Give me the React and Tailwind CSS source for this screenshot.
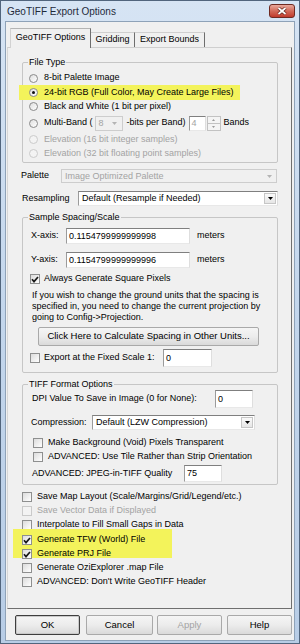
import React from 'react';

const Radio = ({ checked, disabled }) => (
  <span
    className={`w-[9px] h-[9px] rounded-full border flex items-center justify-center shrink-0 ${
      disabled ? 'border-[#cbcbcb] bg-[#f3f3f3]' : 'border-[#8a8a8a] bg-gradient-to-br from-[#dedede] to-white'
    }`}
  >
    {checked && <span className="w-[3px] h-[3px] rounded-full bg-[#111]" />}
  </span>
);

const Check = ({ checked, disabled }) => (
  <span
    className={`w-[10px] h-[10px] border shrink-0 flex items-center justify-center ${
      disabled ? 'border-[#cacaca] bg-[#f3f3f3]' : 'border-[#8e8f8f] bg-gradient-to-br from-[#dcdcdc] to-white'
    }`}
  >
    {checked && (
      <svg width="8" height="7" viewBox="0 0 8 7">
        <path d="M1 3.3 L3 5.6 L7 1" stroke="#1a1a1a" strokeWidth="1.7" fill="none" />
      </svg>
    )}
  </span>
);

const Field = ({ value, className = '', muted }) => (
  <div
    className={`bg-white border border-t-[#7f7f7f] border-l-[#9b9b9b] border-r-[#dedede] border-b-[#e8e8e8] flex items-center pl-[2px] leading-none ${
      muted ? 'text-[#a3a3a3] bg-[#f6f6f6]' : ''
    } ${className}`}
  >
    {value}
  </div>
);

const Arrow = ({ muted }) => (
  <svg width="5" height="3" viewBox="0 0 5 3">
    <path d="M0 0h5L2.5 3z" fill={muted ? '#b4b4b4' : '#000'} />
  </svg>
);

const Combo = ({ value, className = '', disabled }) => (
  <div
    className={`flex items-center border leading-none ${
      disabled
        ? 'border-[#cdcdcd] bg-[#f0f0f0] text-[#a3a3a3]'
        : 'border-t-[#7f7f7f] border-l-[#9b9b9b] border-r-[#dedede] border-b-[#e8e8e8] bg-white'
    } ${className}`}
  >
    <span className="flex-1 pl-[3px] whitespace-nowrap overflow-hidden">{value}</span>
    <span
      className={`w-[12px] self-stretch m-[1px] flex items-center justify-center ${
        disabled ? '' : 'border border-[#c6c6c6] bg-gradient-to-b from-[#fafafa] to-[#e6e6e6]'
      }`}
    >
      <Arrow muted={disabled} />
    </span>
  </div>
);

const Btn = ({ children, className = '', primary, disabled }) => (
  <div
    className={`flex items-center justify-center rounded-[2px] border bg-gradient-to-b from-[#f5f5f5] via-[#ececec] to-[#dadada] text-[9.5px] ${
      primary ? 'border-[#3e3e3e] shadow-[inset_0_0_0_1px_#c9c9c9]' : 'border-[#a9a9a9]'
    } ${disabled ? 'text-[#a3a3a3]' : ''} ${className}`}
  >
    {children}
  </div>
);

const Group = ({ label, className = '', children }) => (
  <div className={`w-[256px] border border-[#c6c6c6] rounded-[2px] flex flex-col ${className}`}>
    <div className="-mt-[7px] ml-[5px] px-[1px] w-fit bg-[#f0f0f0] leading-[12px]">{label}</div>
    {children}
  </div>
);

const Row = ({ className = '', children }) => <div className={`flex items-center whitespace-nowrap ${className}`}>{children}</div>;

export default function App() {
  return (
    <div className="w-[300px] h-[644px] border border-[#51657d] bg-gradient-to-b from-[#d6e4f4] via-[#c3d6ec] to-[#b8cde6] flex flex-col font-['Liberation_Sans',Arial,sans-serif] text-[9px] text-black overflow-hidden">
      {/* title bar */}
      <div className="h-[20px] shrink-0 flex items-center pl-[6px] pr-[4px]">
        <span className="text-[10px] text-[#1e2a3a] flex-1">GeoTIFF Export Options</span>
        <div className="w-[26px] h-[14px] rounded-[3px] border border-[#6f2a22] bg-gradient-to-b from-[#e8a89c] via-[#d26a5a] to-[#c0392b] flex items-center justify-center">
          <svg width="10" height="8" viewBox="0 0 10 8">
            <path d="M1.5 1 L8.5 7 M8.5 1 L1.5 7" stroke="#5b1c14" strokeWidth="3.2" />
            <path d="M1.5 1 L8.5 7 M8.5 1 L1.5 7" stroke="#fff" strokeWidth="1.8" />
          </svg>
        </div>
      </div>

      {/* body */}
      <div className="ml-[4px] w-[290px] h-[620px] border border-[#8ea2b8] bg-[#f0f0f0] flex flex-col">
        {/* tabs */}
        <div className="h-[26px] -mb-[1px] flex items-end pl-[4px]">
          <div className="relative z-10 w-[81px] h-[20px] bg-[#f0f0f0] border-t border-l border-r border-t-[#b4b4b4] border-l-[#d2d2d2] border-r-[#6e6e6e] flex justify-center pt-[2px] leading-[12px]">
            GeoTIFF Options
          </div>
          <div className="w-[44px] h-[15px] mb-[1px] border-t border-r border-t-[#cfcfcf] border-r-[#6e6e6e] flex justify-center leading-[12px]">
            Gridding
          </div>
          <div className="w-[70px] h-[15px] mb-[1px] border-t border-r border-t-[#cfcfcf] border-r-[#6e6e6e] flex justify-center leading-[12px]">
            Export Bounds
          </div>
        </div>

        {/* panel */}
        <div className="ml-[1px] w-[285px] h-[562px] shrink-0 border border-t-[#cfcfcf] border-l-[#d6d6d6] border-r-[#6f6f6f] border-b-[#6f6f6f] bg-[#f0f0f0] flex flex-col pl-[14px]">
          {/* File Type */}
          <Group label="File Type" className="mt-[14px] pb-[1px]">
            <div className="h-[3px]" />
            <Row className="h-[14px] pl-[6px]">
              <Radio />
              <span className="ml-[6px]">8-bit Palette Image</span>
            </Row>
            <Row className="h-[15px] -ml-[4px] w-[221px] pl-[10px] bg-[#f3f35b]">
              <Radio checked />
              <span className="ml-[6px]">24-bit RGB (Full Color, May Create Large Files)</span>
            </Row>
            <Row className="h-[13px] pl-[6px]">
              <Radio />
              <span className="ml-[6px]">Black and White (1 bit per pixel)</span>
            </Row>
            <Row className="h-[20px] pl-[6px]">
              <Radio />
              <span className="ml-[6px]">Multi-Band (</span>
              <Combo value="8" disabled className="ml-[2px] w-[28px] h-[15px] border-[#bdbdbd]" />
              <span className="ml-[4px]">-bits per Band)</span>
              <Field value="4" muted className="ml-[3px] w-[17px] h-[15px]" />
              <div className="w-[14px] h-[15px] flex flex-col ml-[1px]">
                <div className="flex-1 border border-[#c2c2c2] bg-[#f4f4f4] flex items-center justify-center">
                  <svg width="3" height="2" viewBox="0 0 3 2"><path d="M0 2h3L1.5 0z" fill="#9a9a9a" /></svg>
                </div>
                <div className="flex-1 border border-t-0 border-[#c2c2c2] bg-[#f4f4f4] flex items-center justify-center">
                  <svg width="3" height="2" viewBox="0 0 3 2"><path d="M0 0h3L1.5 2z" fill="#9a9a9a" /></svg>
                </div>
              </div>
              <span className="ml-[3px]">Bands</span>
            </Row>
            <Row className="h-[13px] pl-[6px] text-[#a3a3a3]">
              <Radio disabled />
              <span className="ml-[6px]">Elevation (16 bit integer samples)</span>
            </Row>
            <Row className="h-[15px] pl-[6px] text-[#a3a3a3]">
              <Radio disabled />
              <span className="ml-[6px]">Elevation (32 bit floating point samples)</span>
            </Row>
          </Group>

          {/* Palette / Resampling */}
          <Row className="mt-[6px] h-[14px] -ml-[1px]">
            <span className="w-[40px]">Palette</span>
            <Combo value="Image Optimized Palette" disabled className="w-[216px] h-[14px]" />
          </Row>
          <Row className="mt-[8px] h-[15px]">
            <span className="w-[56px]">Resampling</span>
            <Combo value="Default (Resample if Needed)" className="w-[200px] h-[15px]" />
          </Row>

          {/* Sample Spacing/Scale */}
          <Group label="Sample Spacing/Scale" className="mt-[11px] pb-[5px]">
            <Row className="mt-[5px] h-[16px] pl-[8px]">
              <span className="w-[35px]">X-axis:</span>
              <Field value="0.1154799999999998" className="w-[124px] h-[16px]" />
              <span className="ml-[7px]">meters</span>
            </Row>
            <Row className="mt-[8px] h-[16px] pl-[8px]">
              <span className="w-[35px]">Y-axis:</span>
              <Field value="0.1154799999999996" className="w-[124px] h-[16px]" />
              <span className="ml-[7px]">meters</span>
            </Row>
            <Row className="mt-[4px] h-[14px] pl-[7px]">
              <Check checked />
              <span className="ml-[4px]">Always Generate Square Pixels</span>
            </Row>
            <p className="mt-[4px] pl-[9px] leading-[11px] whitespace-nowrap">
              If you wish to change the ground units that the spacing is
              <br />
              specified in, you need to change the current projection by
              <br />
              going to Config-&gt;Projection.
            </p>
            <Btn className="mt-[4px] ml-[15px] w-[221px] h-[19px]">Click Here to Calculate Spacing in Other Units...</Btn>
            <Row className="mt-[3px] h-[18px] pl-[7px]">
              <Check />
              <span className="ml-[4px] w-[119px]">Export at the Fixed Scale 1:</span>
              <Field value="0" className="w-[49px] h-[18px]" />
            </Row>
          </Group>

          {/* TIFF Format Options */}
          <Group label="TIFF Format Options" className="mt-[11px] pb-[2px]">
            <Row className="h-[18px] pl-[9px]">
              <span className="w-[183px]">DPI Value To Save in Image (0 for None):</span>
              <Field value="0" className="w-[38px] h-[18px]" />
            </Row>
            <Row className="mt-[7px] h-[15px] pl-[8px]">
              <span className="w-[61px]">Compression:</span>
              <Combo value="Default (LZW Compression)" className="w-[163px] h-[15px]" />
            </Row>
            <Row className="mt-[6px] h-[14px] pl-[10px]">
              <Check />
              <span className="ml-[5px]">Make Background (Void) Pixels Transparent</span>
            </Row>
            <Row className="h-[14px] pl-[10px]">
              <Check />
              <span className="ml-[5px]">ADVANCED: Use Tile Rather than Strip Orientation</span>
            </Row>
            <Row className="mt-[1px] h-[17px] pl-[9px]">
              <span className="w-[152px]">ADVANCED: JPEG-in-TIFF Quality</span>
              <Field value="75" className="w-[38px] h-[17px]" />
            </Row>
          </Group>

          {/* other options */}
          <Row className="mt-[5px] h-[14px]">
            <Check />
            <span className="ml-[5px]">Save Map Layout (Scale/Margins/Grid/Legend/etc.)</span>
          </Row>
          <Row className="h-[14px] text-[#a3a3a3]">
            <Check disabled />
            <span className="ml-[5px]">Save Vector Data if Displayed</span>
          </Row>
          <Row className="h-[14px]">
            <Check />
            <span className="ml-[5px]">Interpolate to Fill Small Gaps in Data</span>
          </Row>
          <div className="-mt-[3px] -ml-[9px] w-[159px] h-[29px] pl-[9px] pt-[4px] bg-[#f3f35b] flex flex-col">
            <Row className="h-[14px] shrink-0">
              <Check checked />
              <span className="ml-[5px]">Generate TFW (World) File</span>
            </Row>
            <Row className="h-[14px] shrink-0">
              <Check checked />
              <span className="ml-[5px]">Generate PRJ File</span>
            </Row>
          </div>
          <Row className="mt-[3px] h-[14px]">
            <Check />
            <span className="ml-[5px]">Generate OziExplorer .map File</span>
          </Row>
          <Row className="h-[14px]">
            <Check />
            <span className="ml-[5px]">ADVANCED: Don&apos;t Write GeoTIFF Header</span>
          </Row>
        </div>

        {/* buttons */}
        <div className="mt-[6px] h-[20px] flex">
          <Btn primary className="ml-[9px] w-[65px]">OK</Btn>
          <Btn className="ml-[6px] w-[67px]">Cancel</Btn>
          <Btn disabled className="ml-[4px] w-[65px]">Apply</Btn>
          <Btn className="ml-[5px] w-[65px]">Help</Btn>
        </div>
      </div>
    </div>
  );
}
